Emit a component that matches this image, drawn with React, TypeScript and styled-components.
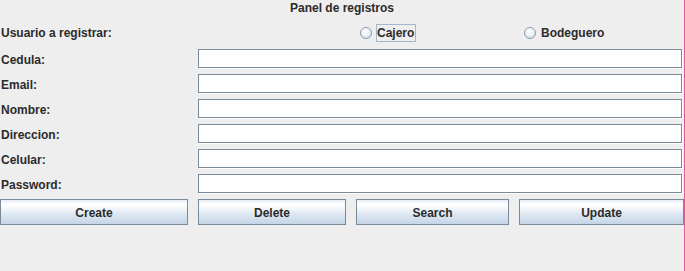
import React from "react";
import styled, { createGlobalStyle } from "styled-components";

const Global = createGlobalStyle`
  html, body { margin: 0; padding: 0; background: #eeeeee; }
  body { font-family: "Liberation Sans", Arial, sans-serif; }
`;

const Frame = styled.div`
  width: 684px;
  height: 271px;
  border-right: 1px solid #e0589c;
  background: #eeeeee;
  display: flex;
  flex-direction: column;
  font: bold 12px "Liberation Sans", Arial, sans-serif;
  color: #2b2b2b;
`;

const Title = styled.div`
  height: 17px;
  line-height: 17px;
  text-align: center;
`;

const RadioRow = styled.div`
  margin-top: 4px;
  height: 24px;
  display: grid;
  grid-template-columns: 358px 164px 1fr;
  align-items: center;
`;

const Label = styled.div`
  padding-left: 1px;
  white-space: nowrap;
`;

const RadioOption = styled.label`
  display: flex;
  align-items: center;
  padding-left: 2px;
  gap: 4px;
`;

const Circle = styled.span`
  width: 12px;
  height: 12px;
  box-sizing: border-box;
  border-radius: 50%;
  border: 1px solid #8c9aa8;
  background: radial-gradient(circle at 45% 35%, #ffffff 0%, #eef3f9 40%, #c4d4e5 100%);
`;

const RadioText = styled.span<{ $focused?: boolean }>`
  border: 1px solid ${(p) => (p.$focused ? "#a3b8cc" : "transparent")};
  padding: 0 1px 0 0;
  height: 16px;
  line-height: 16px;
`;

const Form = styled.div`
  margin-top: 4px;
  display: grid;
  grid-template-columns: 198px 485px;
  grid-auto-rows: 20px;
  row-gap: 5px;
  align-items: center;
`;

const Field = styled.input`
  box-sizing: border-box;
  width: 484px;
  height: 19px;
  margin: 0 1px 1px 0;
  border: 1px solid #7a8a99;
  box-shadow: 1px 1px 0 #ffffff;
  background: #ffffff;
  outline: none;
  padding: 0 2px;
  font: 12px "Liberation Sans", Arial, sans-serif;
  align-self: start;
`;

const FieldLabel = styled.div`
  padding: 1px 0 0 1px;
  box-sizing: border-box;
  height: 20px;
  line-height: 20px;
`;

const Buttons = styled.div`
  margin-top: 5px;
  display: flex;
  gap: 10px;
`;

const Button = styled.button<{ $w: number }>`
  width: ${(p) => p.$w}px;
  height: 26px;
  box-sizing: border-box;
  border: 1px solid #7a8a99;
  background: linear-gradient(to bottom, #e3ecf6 0%, #ffffff 18%, #f3f7fb 35%, #dde7f2 60%, #c4d5e7 100%);
  font: bold 12px "Liberation Sans", Arial, sans-serif;
  color: #2b2b2b;
  padding: 2px 0 0 0;
  cursor: pointer;
`;

const fields = ["Cedula:", "Email:", "Nombre:", "Direccion:", "Celular:", "Password:"];
const buttons: [string, number][] = [
  ["Create", 188],
  ["Delete", 148],
  ["Search", 153],
  ["Update", 165],
];

export default function App() {
  return (
    <>
      <Global />
      <Frame>
        <Title>Panel de registros</Title>
        <RadioRow>
          <Label>Usuario a registrar:</Label>
          <RadioOption>
            <Circle />
            <RadioText $focused>Cajero</RadioText>
          </RadioOption>
          <RadioOption>
            <Circle />
            <RadioText>Bodeguero</RadioText>
          </RadioOption>
        </RadioRow>
        <Form>
          {fields.map((f) => (
            <React.Fragment key={f}>
              <FieldLabel>{f}</FieldLabel>
              <Field type={f === "Password:" ? "password" : "text"} />
            </React.Fragment>
          ))}
        </Form>
        <Buttons>
          {buttons.map(([t, w]) => (
            <Button key={t} $w={w}>
              {t}
            </Button>
          ))}
        </Buttons>
      </Frame>
    </>
  );
}
